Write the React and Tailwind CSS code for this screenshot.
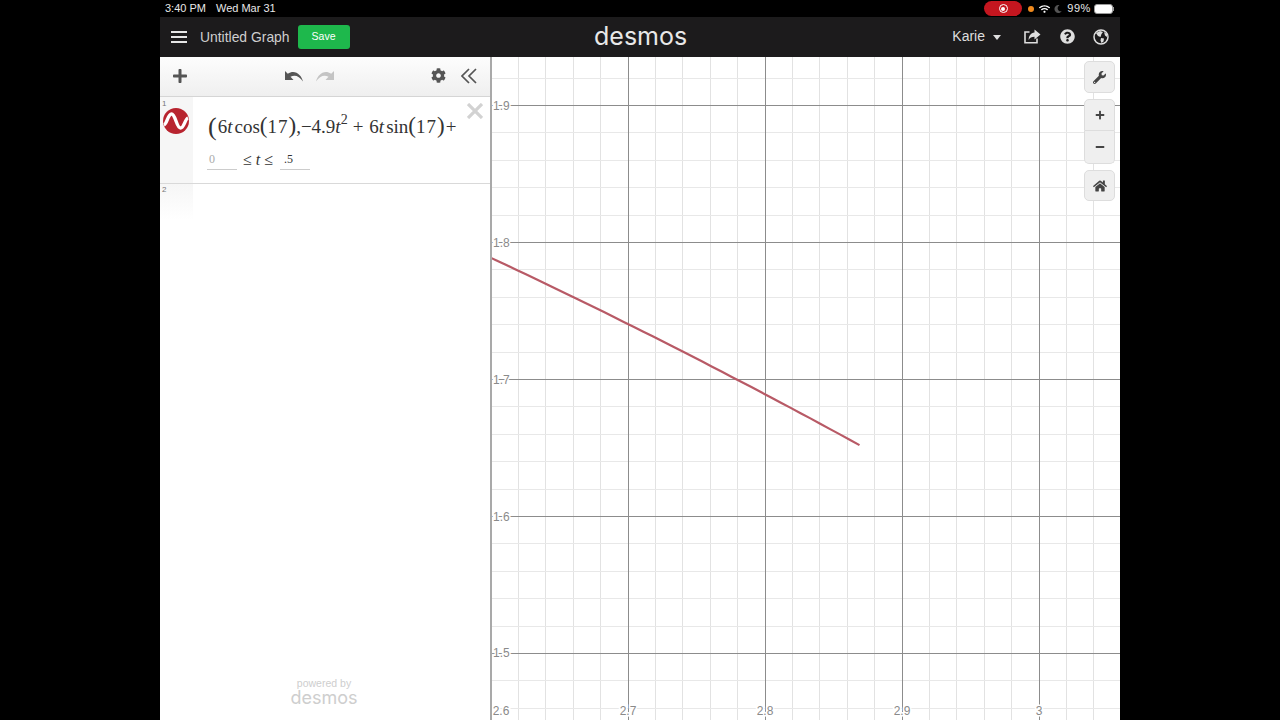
import { FaCog, FaHome, FaMinus, FaMoon, FaPlus, FaQuestionCircle, FaWifi, FaWrench } from "react-icons/fa";

const SANS = "font-['Liberation_Sans',Arial,sans-serif]";

function StatusBar() {
  return (
    <div className={`flex h-[17px] items-center justify-between bg-black pl-[5px] pr-[6px] text-[11px] text-[#e8e8e8] ${SANS}`}>
      <div className="flex gap-[10px]">
        <span>3:40 PM</span>
        <span>Wed Mar 31</span>
      </div>
      <div className="flex items-center">
        <div className="flex h-[15px] w-[38px] items-center justify-center rounded-full bg-[#c4161f]">
          <div className="flex h-[9px] w-[9px] items-center justify-center rounded-full border border-white">
            <div className="h-[4px] w-[4px] rounded-full bg-white" />
          </div>
        </div>
        <div className="ml-[6px] h-[6px] w-[6px] rounded-full bg-[#f08a1d]" />
        <FaWifi className="ml-[5px] h-[10px] w-[11px] text-white" />
        <FaMoon className="ml-[4px] h-[8px] w-[8px] text-[#555]" />
        <span className="ml-[5px] tracking-[0.6px]">99%</span>
        <div className="ml-[3px] flex items-center">
          <div className="h-[10px] w-[19px] rounded-[3px] border border-[#999] bg-white" />
          <div className="h-[4px] w-[1px] bg-[#999]" />
        </div>
      </div>
    </div>
  );
}

function ShareIcon() {
  return (
    <svg viewBox="0 0 17 15" className="ml-[23px] h-[15px] w-[17px]">
      <path d="M13 9.5 V13.8 H1 V3 H5.5" fill="none" stroke="currentColor" strokeWidth="1.6" />
      <path d="M10.5 0.5 L16.5 5.5 L10.5 10.5 V7.8 C7.5 7.8 5.8 8.6 4.6 11 C4.6 7 6.8 3.8 10.5 3.4 Z" fill="currentColor" />
    </svg>
  );
}

function GlobeIcon() {
  return (
    <svg viewBox="0 0 16 16" className="ml-[18px] mr-[11px] h-[16px] w-[16px]">
      <circle cx="8" cy="8" r="7" fill="none" stroke="currentColor" strokeWidth="1.5" />
      <path d="M3 4 L7 2 L10 3 L8.5 5 L7.5 8 L5 7 Z M8 9 L11 9.5 L10.5 12.5 L8.5 14 L7.5 11.5 Z M11 3 L14 5 L14 8 L12 6.5 Z" fill="currentColor" />
    </svg>
  );
}

function Header() {
  return (
    <div className={`relative flex h-[40px] items-center bg-[#1c1b1c] ${SANS}`}>
      <div className="ml-[11px] flex w-[16px] flex-col gap-[3px]">
        <div className="h-[2px] bg-[#e6e6e6]" />
        <div className="h-[2px] bg-[#e6e6e6]" />
        <div className="h-[2px] bg-[#e6e6e6]" />
      </div>
      <span className="ml-[13px] text-[13.9px] text-[#cfcfcf]">Untitled Graph</span>
      <button className="ml-[8px] h-[24px] w-[52px] rounded-[3px] bg-[#1eb84c] text-[10.5px] text-white">Save</button>
      <span className="absolute left-[434px] top-[2px] font-['Inter',sans-serif] text-[25px] leading-[34px] text-[#e8e8e8]">
        desmos
      </span>
      <div className="ml-auto mb-[1px] flex items-center text-[#dedede]">
        <span className="text-[14px]">Karie</span>
        <div className="ml-[8px] mt-[1px] h-0 w-0 border-x-[4.5px] border-t-[5px] border-x-transparent border-t-[#dedede]" />
        <ShareIcon />
        <FaQuestionCircle className="ml-[19px] h-[15px] w-[15px]" />
        <GlobeIcon />
      </div>
    </div>
  );
}

function TurnArrow({ className }) {
  return (
    <svg viewBox="0 0 20 14" className={className}>
      <path d="M1 2 V11 H9.5 L6.5 7.8 C10.5 5.5 15 6.5 19 12.5 C17.5 6 11 0 3.8 4.8 Z" fill="currentColor" />
    </svg>
  );
}

function Toolbar() {
  return (
    <div className="flex h-[40px] items-center border-b border-[#d5d5d5] bg-gradient-to-b from-[#fdfdfd] to-[#efefef] pb-[2px] text-[#555]">
      <FaPlus className="ml-[12px] h-[16px] w-[16px]" />
      <TurnArrow className="ml-[96px] h-[14px] w-[20px]" />
      <TurnArrow className="ml-[11px] h-[14px] w-[20px] -scale-x-100 text-[#c4c4c4]" />
      <FaCog className="ml-[96px] h-[15px] w-[15px]" />
      <svg viewBox="0 0 16 16" className="ml-[15px] h-[16px] w-[16px]" fill="none" stroke="currentColor" strokeWidth="1.7">
        <path d="M8 1 L1 8 L8 15 M15 1 L8 8 L15 15" />
      </svg>
    </div>
  );
}

function Parens({ children }) {
  return (
    <>
      <span className="text-[23px] leading-none">(</span>
      <span className="tracking-[1px]">{children}</span>
      <span className="text-[23px] leading-none">)</span>
    </>
  );
}

function Expression() {
  return (
    <div className="flex h-[87px] border-b border-[#d9d9d9]">
      <div className="relative w-[33px] shrink-0 bg-[#f6f6f6] pl-[2px] text-[8px] text-[#777]">
        <span className={SANS}>1</span>
        <svg viewBox="0 0 26 26" className="absolute left-[3px] top-[11px] h-[26px] w-[26px]">
          <circle cx="13" cy="13" r="13" fill="#b8242f" />
          <path d="M1 17 C4 16 5 6 8.5 6 C12.5 6 13.5 20 17.5 20 C21 20 22 11 25 10" fill="none" stroke="#fff" strokeWidth="3.4" />
        </svg>
      </div>
      <div className="relative min-w-0 flex-1 font-['Liberation_Serif',serif] text-[#333]">
        <div className="ml-[15px] mt-[12px] flex h-[36px] items-center whitespace-nowrap text-[19px]">
          <span className="mr-[1px] text-[26px] leading-none">(</span>
          <span>6<i>t</i></span>
          <span className="ml-[2px]">cos</span>
          <span><Parens>17</Parens></span>
          <span>,</span>
          <span>−4.9<i>t</i></span>
          <sup className="top-[-7px] text-[14px]">2</sup>
          <span className="ml-[5px]">+</span>
          <span className="ml-[6px]">6<i>t</i></span>
          <span className="ml-[2px]">sin</span>
          <span><Parens>17</Parens></span>
          <span className="ml-[1px]">+</span>
        </div>
        <div className="ml-[14px] mt-[4px] flex items-end text-[12px]">
          <div className="h-[21px] w-[30px] border-b border-[#ccc] pl-[2px] leading-[20px] text-[#aaa]">0</div>
          <div className="ml-[6px] h-[21px] text-[16px] leading-[21px]">≤ <i>t</i> ≤</div>
          <div className="ml-[7px] h-[21px] w-[30px] border-b border-[#ccc] pl-[4px] leading-[20px]">.5</div>
        </div>
        <svg viewBox="0 0 16 16" className="absolute right-[7px] top-[6px] h-[16px] w-[16px]" stroke="#d2d2d2" strokeWidth="3.2">
          <path d="M1 1 L15 15 M15 1 L1 15" />
        </svg>
      </div>
    </div>
  );
}

function EmptyExpression() {
  return (
    <div className="flex h-[36px]">
      <div className={`w-[33px] bg-gradient-to-b from-[#f6f6f6] to-white pl-[2px] text-[8px] text-[#777] ${SANS}`}>2</div>
    </div>
  );
}

function Sidebar() {
  return (
    <div className="flex w-[330px] shrink-0 flex-col bg-white">
      <Toolbar />
      <Expression />
      <EmptyExpression />
      <div className="mb-[12px] mr-[2px] mt-auto flex flex-col items-center text-[#cecece]">
        <span className={`text-[10.5px] leading-[10px] ${SANS}`}>powered by</span>
        <span className="font-['Inter',sans-serif] text-[18px] leading-[20px]">desmos</span>
      </div>
    </div>
  );
}

// grid positions, relative to the graph's own corner
const STEP = 27.4;
const vLines = Array.from({ length: 24 }, (_, i) => ({ x: Math.floor(-1 + i * STEP) + 0.5, major: i % 5 === 0 }));
const hLines = Array.from({ length: 25 }, (_, i) => ({ y: Math.floor(21.1 + i * STEP) + 0.5, major: (i - 1) % 5 === 0 }));
const yLabels = [
  ["1.9", 48.5],
  ["1.8", 185.5],
  ["1.7", 322.5],
  ["1.6", 459.5],
  ["1.5", 596],
];
const xLabels = [
  ["2.6", 9],
  ["2.7", 136],
  ["2.8", 273],
  ["2.9", 410],
  ["3", 547],
];

// the parametric curve from the expression, t from the left edge up to .5
const curve = Array.from({ length: 41 }, (_, i) => {
  const t = 0.45 + (i / 40) * 0.05;
  const x = 5.738 * t;
  const y = 2 + 1.7542 * t - 4.9 * t * t;
  return `${((x - 2.6) * 1370 - 1).toFixed(1)},${(322.5 - (y - 1.7) * 1370).toFixed(1)}`;
}).join(" ");

function Graph() {
  return (
    <div className="relative min-w-0 flex-1 border-l-2 border-[#a9a9a9] bg-white">
      <svg viewBox="0 0 628 663" className="block h-full w-full font-['Liberation_Sans',sans-serif]">
        {vLines.filter((l) => !l.major).map((l) => (
          <line key={l.x} x1={l.x} x2={l.x} y1="0" y2="663" stroke="#e2e2e2" />
        ))}
        {hLines.filter((l) => !l.major).map((l) => (
          <line key={l.y} x1="0" x2="628" y1={l.y} y2={l.y} stroke="#e8e8e8" />
        ))}
        {vLines.filter((l) => l.major).map((l) => (
          <line key={l.x} x1={l.x} x2={l.x} y1="0" y2="663" stroke="#8c8c8c" />
        ))}
        {hLines.filter((l) => l.major).map((l) => (
          <line key={l.y} x1="0" x2="628" y1={l.y} y2={l.y} stroke="#8c8c8c" />
        ))}
        <polyline points={curve} fill="none" stroke="#b85a66" strokeWidth="2.2" />
        {yLabels.map(([t, y]) => (
          <text key={t} x="1" y={y + 4} fontSize="12" fill="#8a8a8a" stroke="#fff" strokeWidth="3" paintOrder="stroke">
            {t}
          </text>
        ))}
        {xLabels.map(([t, x]) => (
          <text key={t} x={x} y="658" textAnchor="middle" fontSize="12" fill="#8a8a8a" stroke="#fff" strokeWidth="3" paintOrder="stroke">
            {t}
          </text>
        ))}
      </svg>
      <div className="absolute right-[5px] top-[4px] flex w-[31px] flex-col text-[#444]">
        <div className="flex h-[32px] items-center justify-center rounded-[5px] border border-[#ddd] bg-[#efefef]">
          <FaWrench className="h-[13px] w-[13px]" />
        </div>
        <div className="mt-[6px] flex h-[32px] items-center justify-center rounded-t-[5px] border border-[#ddd] bg-[#efefef]">
          <FaPlus className="h-[10px] w-[10px]" />
        </div>
        <div className="flex h-[33px] items-center justify-center rounded-b-[5px] border border-t-0 border-[#ddd] bg-[#efefef]">
          <FaMinus className="h-[10px] w-[10px]" />
        </div>
        <div className="mt-[6px] flex h-[31px] items-center justify-center rounded-[5px] border border-[#ddd] bg-[#efefef]">
          <FaHome className="h-[14px] w-[14px]" />
        </div>
      </div>
    </div>
  );
}

export default function App() {
  return (
    <div className="flex h-screen w-screen justify-center overflow-hidden bg-black">
      <div className="flex w-[960px] flex-col">
        <StatusBar />
        <Header />
        <div className="flex min-h-0 flex-1">
          <Sidebar />
          <Graph />
        </div>
      </div>
    </div>
  );
}
